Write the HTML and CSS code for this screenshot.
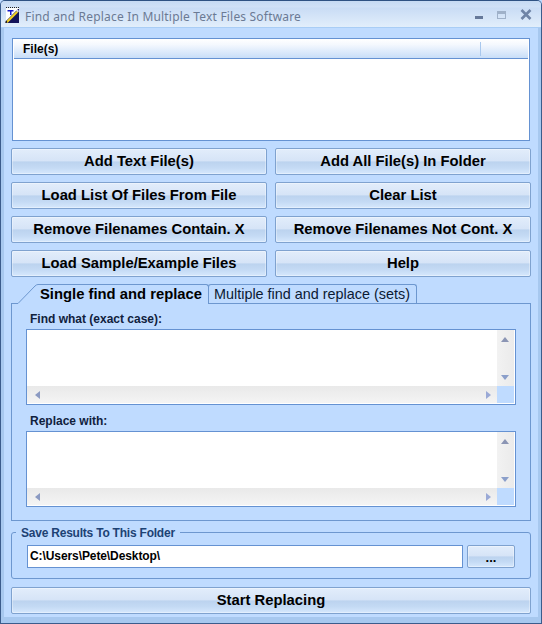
FILE: index.html
```html
<!DOCTYPE html>
<html lang="en">
<head>
<meta charset="utf-8">
<title>Find and Replace In Multiple Text Files Software</title>
<link rel="stylesheet" href="styles.css">
</head>
<body>
<div class="window">
  <header class="titlebar">
    <svg class="appicon" width="14" height="16" viewBox="0 0 14 16">
      <rect x="1" y="1" width="13" height="15" fill="#14145a"/>
      <path d="M1 1h13v1H1z" fill="#fff"/>
      <path d="M1 0h1v1H1zM3 0h1v1H3zM5 0h1v1H5zM7 0h1v1H7zM9 0h1v1H9zM11 0h1v1h-1zM13 0h1v1h-1z" fill="#222"/>
      <path d="M1 2h12L1 14z" fill="#fff"/>
      <path d="M2.500 3h6v1.500H6.500V8H5V4.500H2.500z" fill="#1414c8"/>
      <path d="M1 14.500 11.500 4l1.500 1.500L2.500 16z" fill="#f2d020"/>
      <path d="M11 3.500l1.500-1 1.500 1.500-1 1.500z" fill="#e4e4e4"/>
      <path d="M0 16l1-2.500 1.500 1.500z" fill="#111"/>
    </svg>
    <span class="title">Find and Replace In Multiple Text Files Software</span>
    <div class="wincontrols">
      <svg width="10" height="10" viewBox="0 0 10 10"><rect x="1" y="6" width="8" height="3" fill="#66799a"/></svg>
      <svg width="10" height="10" viewBox="0 0 10 10"><rect x=".5" y="1.500" width="8" height="7" fill="none" stroke="#9fb1c9"/><rect x="1" y="2" width="7" height="2" fill="#9fb1c9"/></svg>
      <svg width="12" height="11" viewBox="0 0 12 11"><path d="M1.500 1 L10.500 10 M10.500 1 L1.500 10" stroke="#6f84a6" stroke-width="2.600" fill="none"/></svg>
    </div>
  </header>

  <main class="client">
    <section class="filelist">
      <div class="filehead"><span class="filecol">File(s)</span><span class="fileend"></span></div>
      <div class="filebody"></div>
    </section>

    <div class="actions">
      <button class="btn">Add Text File(s)</button>
      <button class="btn">Add All File(s) In Folder</button>
      <button class="btn">Load List Of Files From File</button>
      <button class="btn">Clear List</button>
      <button class="btn">Remove Filenames Contain. X</button>
      <button class="btn">Remove Filenames Not Cont. X</button>
      <button class="btn">Load Sample/Example Files</button>
      <button class="btn">Help</button>
    </div>

    <section class="tabs">
      <div class="tabstrip">
        <div class="tab active">
          <svg class="tabslant" width="29" height="20" viewBox="0 0 29 20"><path d="M0 0 H29 V20 H0 Z" fill="#bfdbff"/><path d="M0 19.500 H7 L24 2 Q25.500 .5 27 .5 H29" fill="none" stroke="#6d97cf"/></svg>
          <span>Single find and replace</span>
        </div>
        <div class="tab">Multiple find and replace (sets)</div>
      </div>
      <div class="tabpanel">
        <label class="fieldlabel">Find what (exact case):</label>
        <div class="memo">
          <div class="memotext"></div>
          <div class="vscroll"><i class="arrow up"></i><i class="arrow down"></i></div>
          <div class="hscroll"><i class="arrow left"></i><i class="arrow right"></i></div>
          <div class="corner"></div>
        </div>
        <label class="fieldlabel second">Replace with:</label>
        <div class="memo">
          <div class="memotext"></div>
          <div class="vscroll"><i class="arrow up"></i><i class="arrow down"></i></div>
          <div class="hscroll"><i class="arrow left"></i><i class="arrow right"></i></div>
          <div class="corner"></div>
        </div>
      </div>
    </section>

    <fieldset class="savegroup">
      <legend>Save Results To This Folder</legend>
      <div class="saverow">
        <div class="pathinput">C:\Users\Pete\Desktop\</div>
        <button class="btn browse">...</button>
      </div>
    </fieldset>

    <button class="btn start">Start Replacing</button>
  </main>
</div>
</body>
</html>
```

FILE: styles.css
```css
* { box-sizing: border-box; }
html, body { margin: 0; padding: 0; }
body { width: 542px; height: 624px; overflow: hidden; background: #bfdbff; font-family: "Liberation Sans", Arial, sans-serif; color: #000; }

.window {
  width: 542px; height: 624px;
  display: flex; flex-direction: column;
  background: #bfdbff;
  border: 1px solid #3b5c8c;
  border-top-color: #2f5283;
  border-radius: 5px 5px 0 0;
}

.titlebar {
  height: 27px;
  flex: none;
  display: flex; align-items: center;
  padding: 4px 3px 0 4px;
  background: linear-gradient(#c6daf3 0, #d0e1f7 6px, #c9dcf5 7px, #e2eefb 100%);
  border-bottom: 1px solid #a9cdf5;
  border-radius: 4px 4px 0 0;
}
.appicon { flex: none; margin-top: -3px; }
.title { margin-left: 6px; font: 12px "Noto Sans", sans-serif; color: #6b7a94; letter-spacing: .19px; white-space: nowrap; }
.wincontrols { margin-left: auto; display: flex; align-items: center; gap: 13px; padding-right: 6px; margin-top: -3px; }

.client {
  flex: 1;
  display: flex; flex-direction: column;
  padding: 10px 7px 0;
  background: #bfdbff;
  border-left: 3px solid #a7c8ef;
  border-right: 3px solid #a7c8ef;
  border-bottom: 6px solid #a7c8ef;
}

.filelist {
  margin: 0 1px;
  height: 103px; flex: none;
  background: #fff;
  border: 1px solid #6592d2;
  padding: 0 1px;
  display: flex; flex-direction: column;
}
.filehead {
  height: 20px; flex: none;
  display: flex; align-items: center;
  background: linear-gradient(#fff 0, #f4f8fe 30%, #c8def8 100%);
  border-bottom: 1px solid #6592d2;
  padding-left: 9px;
  font-size: 12px; font-weight: bold;
}
.filecol { flex: 1; padding-top: 1px; line-height: 18px; }
.fileend { width: 48px; height: 14px; border-left: 1px solid #a8c8ee; }
.filebody { flex: 1; }

.btn {
  display: block;
  margin: 0; padding: 0 0 2px;
  font: bold 14.8px "Liberation Sans", Arial, sans-serif;
  color: #000;
  border: 1px solid #7fa2cf;
  border-radius: 2px;
  background: linear-gradient(#e2edfb 0, #d6e4f7 47%, #bcd3ef 52%, #c4daf4 75%, #d6e8fd 100%);
  box-shadow: inset 0 0 0 1px rgba(255,255,255,.35);
}

.actions {
  margin-top: 7px;
  flex: none;
  display: grid;
  grid-template-columns: 256px 256px;
  grid-auto-rows: 27px;
  column-gap: 8px;
  row-gap: 7px;
}

.tabs { margin-top: 7px; flex: none; }
.tabstrip { height: 19px; display: flex; align-items: flex-start; position: relative; z-index: 1; }
.tab {
  height: 19px;
  margin-left: -1px;
  padding: 0 6px 0 5px;
  background: #bfdbff;
  border: 1px solid #6d97cf;
  border-bottom: none;
  border-radius: 3px 3px 0 0;
  font-size: 14.4px;
  line-height: 19px;
  color: #0b1a33;
  white-space: nowrap;
}
.tab.active {
  position: relative;
  width: 198px;
  height: 20px;
  margin: 0;
  padding: 0 0 0 29px;
  border-left: none;
  font-size: 14.8px;
  font-weight: bold;
  color: #000;
  line-height: 18px;
  z-index: 2;
}
.tabslant { position: absolute; left: 0; top: -1px; }
.tab.active span { position: relative; }

.tabpanel {
  height: 218px;
  border: 1px solid #6d97cf;
  padding: 8px 14px 0;
  display: flex; flex-direction: column;
}
.fieldlabel { display: block; height: 17px; margin-left: 4px; font-size: 12px; font-weight: bold; line-height: 14px; color: #10213d; }
.fieldlabel.second { margin-top: 9px; }

.memo {
  height: 76px; flex: none;
  background: #fff;
  border: 1px solid #6592d2;
  padding: 0 1px 1px 0;
  display: grid;
  grid-template-columns: 1fr 17px;
  grid-template-rows: 1fr 17px;
}
.vscroll { background: linear-gradient(90deg, #f2f2f2, #ebebeb); display: flex; flex-direction: column; justify-content: space-between; align-items: center; padding: 7px 2px 6px 0; }
.hscroll { background: linear-gradient(#e9e9e9, #f4f4f4); display: flex; justify-content: space-between; align-items: center; padding: 0 6px 0 8px; }
.corner { background: #bfdbff; }

.arrow { display: block; width: 0; height: 0; border-style: solid; border-color: transparent; }
.arrow.up { border-width: 0 4.5px 5px; border-bottom-color: #8b95b4; }
.arrow.down { border-width: 5px 4.5px 0; border-top-color: #8b9fca; }
.arrow.left { border-width: 4.5px 5px 4.5px 0; border-right-color: #8b9ac2; }
.arrow.right { border-width: 4.5px 0 4.5px 5px; border-left-color: #9aa9d6; }

.savegroup {
  margin: 4px 0 0;
  padding: 6px 15px 0;
  height: 54px;
  flex: none;
  border: 1px solid #6d97cf;
  border-radius: 3px;
  min-width: 0;
}
.savegroup legend {
  margin-left: -11px;
  padding: 1px 5px 0;
  height: 14px;
  font-size: 12px; font-weight: bold; line-height: 14px;
  letter-spacing: -.22px;
  color: #1d4274;
}
.saverow { display: flex; gap: 4px; }
.pathinput {
  width: 436px; height: 23px;
  background: #fff;
  border: 1px solid #6592d2;
  padding-left: 2px;
  font-size: 12px; font-weight: bold; line-height: 20px;
  letter-spacing: -.09px;
  color: #000;
}
.btn.browse { width: 48px; height: 23px; padding: 3px 0 0; font-size: 13px; line-height: 12px; }
.start { margin-top: 8px; height: 27px; flex: none; width: 100%; }
```
